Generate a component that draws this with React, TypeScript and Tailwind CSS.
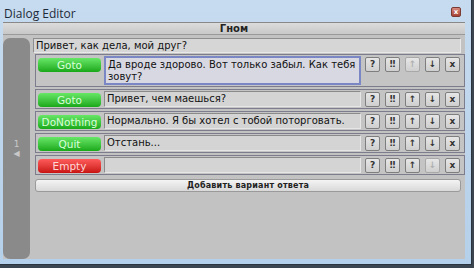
import React from "react";

const font = { fontFamily: '"DejaVu Sans", Verdana, sans-serif' };

function SmallBtn({ label, disabled }: { label: string; disabled?: boolean }) {
  return (
    <div
      className={`w-[15px] h-[15px] rounded-[2px] border flex items-center justify-center text-[9px] font-bold leading-none bg-gradient-to-b from-[#e6e6e6] to-[#cfcfcf] ${
        disabled ? "border-[#a8a8a8] text-[#b0b0b0]" : "border-[#7e7e7e] text-[#333]"
      }`}
    >
      {label}
    </div>
  );
}

function ActionBtn({ label, red }: { label: string; red?: boolean }) {
  return (
    <div
      className={`w-[63px] h-[14px] rounded-[4px] flex items-center justify-center text-[10.5px] leading-none shrink-0 ${
        red
          ? "bg-gradient-to-b from-[#ff5a5a] to-[#c81010] text-[#ffd8d8]"
          : "bg-gradient-to-b from-[#66e866] to-[#16a816] text-[#d8ffd8]"
      }`}
    >
      {label}
    </div>
  );
}

type Row = { action: string; red?: boolean; text: string; tall?: boolean; upDis?: boolean; downDis?: boolean };

const rows: Row[] = [
  { action: "Goto", text: "Да вроде здорово. Вот только забыл. Как тебя зовут?", tall: true, upDis: true },
  { action: "Goto", text: "Привет, чем маешься?" },
  { action: "DoNothing", text: "Нормально. Я бы хотел с тобой поторговать." },
  { action: "Quit", text: "Отстань..." },
  { action: "Empty", red: true, text: "", downDis: true },
];

export default function App() {
  return (
    <div className="w-[474px] h-[268px] bg-[#3c4650] overflow-hidden" style={font}>
      <div className="w-[472px] h-[265px] bg-gradient-to-b from-[#c6dbef] to-[#b5d0ea] border-r border-b border-[#2a3440] flex flex-col">
        {/* Title bar */}
        <div className="h-[22px] flex items-center justify-between pl-[4px] pr-[10px] pt-[5px] shrink-0">
          <span className="text-[12px] text-[#1e2a3a]" style={{ fontFamily: '"Open Sans", "Noto Sans", sans-serif' }}>
            Dialog Editor
          </span>
          <div className="w-[10px] h-[10px] rounded-[2px] bg-gradient-to-b from-[#d88a80] to-[#a84034] border border-[#7a3a34] flex items-center justify-center text-[7px] text-white leading-none font-bold mb-[3px]">
            x
          </div>
        </div>
        {/* Content */}
        <div className="flex-1 ml-[3px] mr-[6px] mb-[5px] bg-[#c2c2c2] flex flex-col">
          <div className="h-[13px] bg-gradient-to-b from-[#dcdcdc] to-[#c8c8c8] border-b border-[#9a9a9a] border-t border-t-[#888] flex items-center justify-center text-[10px] font-bold text-[#222] shrink-0">
            Гном
          </div>
          <div className="flex flex-1 pt-[2px]">
            <div className="w-[27px] bg-[#8a8a8a] rounded-t-[7px] rounded-b-[7px] flex flex-col items-center justify-center text-[#c8c8c8] text-[9px] leading-[10px] shrink-0 mt-[1px]">
              <span>1</span>
              <span className="text-[8px]">◀</span>
            </div>
            <div className="flex-1 pl-[3px] flex flex-col">
              <div className="h-[15px] mt-[1px] mr-[4px] bg-[#d6d6d6] border border-[#8e8e8e] border-r-[#e8e8e8] border-b-[#e8e8e8] text-[10px] text-[#111] flex items-center pl-[2px] leading-none">
                Привет, как дела, мой друг?
              </div>
              <div className="flex flex-col gap-[2px] mt-[1px] ml-[2px]">
                {rows.map((r, i) => (
                  <div key={i} className="border border-[#7c7c8c] bg-[#c4c4c4] flex items-start gap-[3px] pl-[2px] pr-[2px] py-[1px]">
                    <div className="mt-[2px]">
                      <ActionBtn label={r.action} red={r.red} />
                    </div>
                    <div
                      className={`w-[257px] ${r.tall ? "h-[29px] bg-[#d8d8e2] border-[#7b86c4] border-2" : "h-[16px] bg-[#d4d4d4] border border-[#8a8a8a] border-r-[#e6e6e6] border-b-[#e6e6e6]"} text-[10px] text-[#111] leading-[12px] pl-[2px] ${r.tall ? "pt-[1px]" : "flex items-center"}`}
                    >
                      {r.text}
                    </div>
                    <div className="flex gap-[5px] ml-[1px] pt-[1px]">
                      <SmallBtn label="?" />
                      <SmallBtn label="‼" />
                      <SmallBtn label="↑" disabled={r.upDis} />
                      <SmallBtn label="↓" disabled={r.downDis} />
                      <SmallBtn label="x" />
                    </div>
                  </div>
                ))}
              </div>
              <div className="h-[13px] mt-[4px] ml-[2px] mr-[4px] rounded-[3px] bg-gradient-to-b from-[#f4f4f4] to-[#d8d8d8] border border-[#9a9a9a] flex items-center justify-center text-[8px] text-[#222] font-bold tracking-[0.2px]">
                Добавить вариант ответа
              </div>
            </div>
          </div>
        </div>
      </div>
    </div>
  );
}
